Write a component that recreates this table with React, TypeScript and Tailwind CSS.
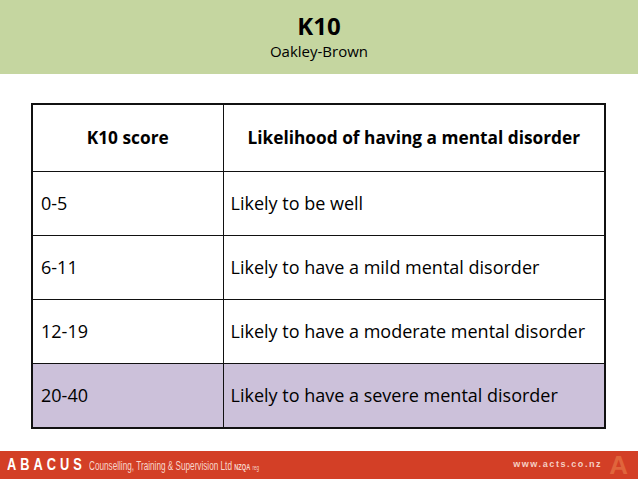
const rows = [
  { score: "0-5", text: "Likely to be well", hl: false },
  { score: "6-11", text: "Likely to have a mild mental disorder", hl: false },
  { score: "12-19", text: "Likely to have a moderate mental disorder", hl: false },
  { score: "20-40", text: "Likely to have a severe mental disorder", hl: true },
];

export default function App() {
  return (
    <div className="flex h-[479px] w-[638px] flex-col bg-white font-['Open_Sans',sans-serif] text-black">
      <header className="flex h-[74px] flex-col items-center justify-center bg-[#c5d6a0] pb-[2px]">
        <h1 className="text-[24px] font-bold leading-[30px]">K10</h1>
        <p className="text-[15px] leading-[20px]">Oakley-Brown</p>
      </header>

      <div className="px-[31px] pt-[29px]">
        <table className="w-[575px] table-fixed border-collapse border-2 border-[#111] text-[18px]">
          <colgroup>
            <col className="w-[191px]" />
            <col />
          </colgroup>
          <thead>
            <tr className="h-[67px] text-[17.3px]">
              <th className="border border-[#111] text-center font-bold">K10 score</th>
              <th className="border border-[#111] text-center font-bold">
                Likelihood of having a mental disorder
              </th>
            </tr>
          </thead>
          <tbody>
            {rows.map((r) => (
              <tr key={r.score} className={r.hl ? "h-[65px] bg-[#ccc1da]" : "h-[64px]"}>
                <td className="border border-[#111] px-[8px] text-left">{r.score}</td>
                <td className="border border-[#111] px-[7px] text-left">{r.text}</td>
              </tr>
            ))}
          </tbody>
        </table>
      </div>

      <footer className="mt-auto flex h-[28px] items-center bg-[#d33f26] pl-[7px] text-white">
        {/* logo strip: condensed type, scaled to match the banner */}
        <span className="w-[82px] whitespace-nowrap font-['Liberation_Sans',sans-serif]">
          <span className="inline-block origin-left scale-x-[0.8] text-[16px] font-bold tracking-[5px]">
            ABACUS
          </span>
        </span>
        <span className="w-[166px] whitespace-nowrap font-['Liberation_Sans',sans-serif] text-[#f8d6cb]">
          <span className="inline-block origin-left scale-x-[0.63] text-[13px]">
            Counselling, Training &amp; Supervision Ltd{" "}
            <b className="text-[9px]">NZQA</b> <span className="text-[7px]">reg</span>
          </span>
        </span>
        <span className="ml-auto font-['Liberation_Sans',sans-serif] text-[9px] font-bold tracking-[1.6px] text-[#f6d0c4]">
          www.acts.co.nz
        </span>
        <span className="ml-[7px] mr-[10px] font-['Liberation_Sans',sans-serif] text-[26px] font-bold leading-[28px] text-[#e0653c]">
          A
        </span>
      </footer>
    </div>
  );
}
